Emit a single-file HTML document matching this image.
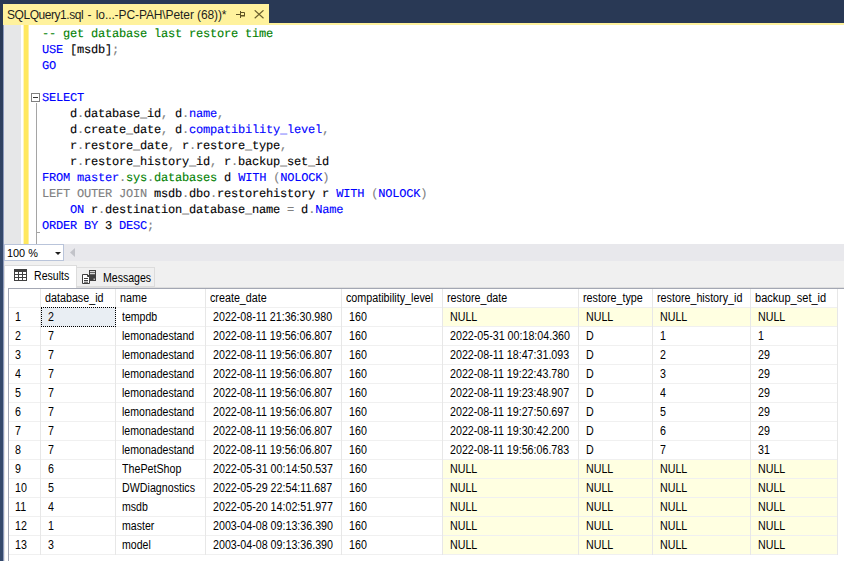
<!DOCTYPE html>
<html><head><meta charset="utf-8"><title>SQLQuery1.sql</title>
<style>
html,body{margin:0;padding:0;}
body{width:844px;height:561px;position:relative;overflow:hidden;background:#fff;font-family:"Liberation Sans",sans-serif;}
div{position:absolute;box-sizing:border-box;}
i{font-style:normal;}
#top{left:0;top:0;width:844px;height:23px;background:#293955;}
#yl{left:0;top:23px;width:844px;height:2px;background:#fff29d;}
#tab{left:3px;top:4px;width:266px;height:21px;background:#fff29d;color:#1e1e1e;font-size:12px;line-height:20px;white-space:nowrap;}
#tabt{left:4px;top:1px;letter-spacing:-0.16px;}
#lft{left:0;top:0;width:3px;height:561px;background:linear-gradient(#293955 0,#293955 25px,#35496b 250px,#35496b 100%);}
#lft2{left:3px;top:25px;width:1px;height:536px;background:#8e9bbc;z-index:5;}
#lft3{left:4px;top:261px;width:1px;height:300px;background:#e4e4e4;}
#margin{left:3px;top:25px;width:18px;height:219px;background:#e6e7e8;}
#ybar{left:23px;top:25px;width:6px;height:219px;background:linear-gradient(90deg,#fff6be 0,#fff6be 1px,#ffe85e 1px,#ffe85e 5px,#fff19e 5px,#fff19e 6px);}
#code{left:42px;top:26px;text-rendering:geometricPrecision;-webkit-text-stroke:0.12px;font-family:"Liberation Mono",monospace;font-size:12px;letter-spacing:-0.2px;line-height:16px;white-space:pre;color:#000;}
#code div{position:static;height:16px;}
.k{color:#0000ff;}.c{color:#008000;}.g{color:#808080;}
#obox{left:31px;top:93px;width:9px;height:9px;border:1px solid #808080;background:#fff;}
#ominus{left:33px;top:97px;width:5px;height:1px;background:#333;}
#oline{left:36px;top:103px;width:1px;height:141px;background:#a5a5a5;}
#otick{left:36px;top:232px;width:4px;height:1px;background:#a5a5a5;}
#zbar{left:3px;top:244px;width:841px;height:17px;background:#e8e8ec;}
#zbox{left:4px;top:244px;width:60px;height:17px;background:#fff;border:1px solid #b9c4da;font-size:12px;line-height:15px;color:#000;}
.sx{position:absolute;white-space:nowrap;transform-origin:0 0;line-height:14px;font-size:12px;color:#000;}
#pane{left:4px;top:261px;width:840px;height:27px;background:#f0f0f0;}
#pane2{left:5px;top:287px;width:839px;height:274px;background:#fff;}
#pl{left:77px;top:287px;width:767px;height:1px;background:#dedede;}
#tabR{left:4px;top:265px;width:73px;height:23px;background:#fff;border:1px solid #dcdcdc;border-bottom:none;}
#tabM{left:76px;top:267px;width:79px;height:20px;background:#f0f0f0;border:1px solid #dcdcdc;}
#grid{left:8px;top:288px;width:836px;height:273px;background:#fff;border-left:1px solid #a3a7b3;border-top:1px solid #a3a7b3;}
.t{font-size:12px;line-height:19px;color:#000;white-space:nowrap;height:19px;transform:scaleX(.88);transform-origin:0 0;}
.d{transform:scaleX(.89);}
.hl{background:#e7e7e7;width:1px;}
.vl{background:#f0f0f0;}
.n{background:#ffffe1;}
</style></head><body>
<div id="top"></div><div id="yl"></div>
<div id="tab"><div id="tabt"><span style="letter-spacing:-0.45px">SQLQuery1.sql</span><span style="word-spacing:1.2px"> - </span><span style="letter-spacing:-0.1px">lo...-PC-PAH\Peter (68))*</span></div>
<svg style="position:absolute;left:233px;top:6px" width="30" height="10" viewBox="0 0 30 10"><path d="M0 4.5H4M4.5 1V8M4.5 2.5H8.5V6M4.5 6H9" fill="none" stroke="#5f5424" stroke-width="1"/><path d="M4.5 5.5H9" fill="none" stroke="#5f5424" stroke-width="1"/><path d="M18.7 0.3L27.5 8.2M27.5 0.3L18.7 8.2" fill="none" stroke="#6b5f2e" stroke-width="1.2"/></svg>
</div>
<div id="lft"></div><div id="lft2"></div>
<div id="margin"></div><div id="ybar"></div>
<div id="code"><div><i class="c">-- get database last restore time</i></div><div><i class="k">USE</i> [msdb]<i class="g">;</i></div><div><i class="k">GO</i></div><div></div><div><i class="k">SELECT</i></div><div>    d<i class="g">.</i>database_id<i class="g">,</i> d<i class="g">.</i><i class="k">name</i><i class="g">,</i></div><div>    d<i class="g">.</i>create_date<i class="g">,</i> d<i class="g">.</i><i class="k">compatibility_level</i><i class="g">,</i></div><div>    r<i class="g">.</i>restore_date<i class="g">,</i> r<i class="g">.</i>restore_type<i class="g">,</i></div><div>    r<i class="g">.</i>restore_history_id<i class="g">,</i> r<i class="g">.</i>backup_set_id</div><div><i class="k">FROM</i> <i class="k">master</i><i class="g">.</i><i class="c">sys</i><i class="g">.</i><i class="c">databases</i> d <i class="k">WITH</i> <i class="g">(</i><i class="k">NOLOCK</i><i class="g">)</i></div><div><i class="g">LEFT OUTER JOIN</i> msdb<i class="g">.</i>dbo<i class="g">.</i>restorehistory r <i class="k">WITH</i> <i class="g">(</i><i class="k">NOLOCK</i><i class="g">)</i></div><div>    <i class="k">ON</i> r<i class="g">.</i>destination_database_name <i class="g">=</i> d<i class="g">.</i><i class="k">Name</i></div><div><i class="k">ORDER BY</i> 3 <i class="k">DESC</i><i class="g">;</i></div></div>
<div id="oline"></div><div id="otick"></div><div id="obox"></div><div id="ominus"></div>
<div id="zbar"></div><div id="zbox"><span class="sx" style="left:2px;top:1px;font-size:11px;transform:scaleX(.99)">100 %</span><svg style="position:absolute;left:50px;top:7px" width="6" height="3"><path d="M0 0H6L3 3Z" fill="#1e1e1e"/></svg></div>
<svg style="position:absolute;left:70px;top:248px" width="5" height="9"><path d="M5 0V9L0 4.5Z" fill="#c2c3c9"/></svg>
<div id="pane"></div><div id="pane2"></div><div id="pl"></div><div id="lft3"></div>
<div id="tabM"><svg style="position:absolute;left:5px;top:2px" width="16" height="15" viewBox="0 0 16 15"><rect x="7" y="0" width="7" height="11" fill="#3f3f3f"/><rect x="8" y="1.2" width="5" height="1" fill="#fff"/><rect x="8" y="3.2" width="5" height="1" fill="#fff"/><rect x="11.6" y="8.6" width="1.2" height="1.2" fill="#fff"/><path d="M0.5 4.5H5.5L7.5 6.5V13.5H0.5Z" fill="#fff" stroke="#3f3f3f"/><path d="M5.5 4.5V6.5H7.5" fill="none" stroke="#3f3f3f"/><path d="M2 8.5H6M2 10.5H6M2 12.2H6" stroke="#3f3f3f"/></svg><span class="sx" style="left:26px;top:3px;transform:scaleX(.88)">Messages</span></div>
<div id="tabR"><svg style="position:absolute;left:9px;top:3px" width="13" height="12" viewBox="0 0 13 12"><rect x="0" y="0" width="13" height="12" fill="#404040"/><g fill="#fff"><rect x="1" y="3" width="3" height="2"/><rect x="5" y="3" width="3" height="2"/><rect x="9" y="3" width="3" height="2"/><rect x="1" y="6" width="3" height="2"/><rect x="5" y="6" width="3" height="2"/><rect x="9" y="6" width="3" height="2"/><rect x="1" y="9" width="3" height="2"/><rect x="5" y="9" width="3" height="2"/><rect x="9" y="9" width="3" height="2"/></g></svg><span class="sx" style="left:29px;top:3px;transform:scaleX(.88)">Results</span></div>
<div id="grid"></div>
<div class="n" style="left:443px;top:308px;width:135px;height:18px"></div>
<div class="n" style="left:579px;top:308px;width:73px;height:18px"></div>
<div class="n" style="left:653px;top:308px;width:97px;height:18px"></div>
<div class="n" style="left:751px;top:308px;width:86px;height:18px"></div>
<div class="n" style="left:443px;top:460px;width:135px;height:18px"></div>
<div class="n" style="left:579px;top:460px;width:73px;height:18px"></div>
<div class="n" style="left:653px;top:460px;width:97px;height:18px"></div>
<div class="n" style="left:751px;top:460px;width:86px;height:18px"></div>
<div class="n" style="left:443px;top:479px;width:135px;height:18px"></div>
<div class="n" style="left:579px;top:479px;width:73px;height:18px"></div>
<div class="n" style="left:653px;top:479px;width:97px;height:18px"></div>
<div class="n" style="left:751px;top:479px;width:86px;height:18px"></div>
<div class="n" style="left:443px;top:498px;width:135px;height:18px"></div>
<div class="n" style="left:579px;top:498px;width:73px;height:18px"></div>
<div class="n" style="left:653px;top:498px;width:97px;height:18px"></div>
<div class="n" style="left:751px;top:498px;width:86px;height:18px"></div>
<div class="n" style="left:443px;top:517px;width:135px;height:18px"></div>
<div class="n" style="left:579px;top:517px;width:73px;height:18px"></div>
<div class="n" style="left:653px;top:517px;width:97px;height:18px"></div>
<div class="n" style="left:751px;top:517px;width:86px;height:18px"></div>
<div class="n" style="left:443px;top:536px;width:135px;height:18px"></div>
<div class="n" style="left:579px;top:536px;width:73px;height:18px"></div>
<div class="n" style="left:653px;top:536px;width:97px;height:18px"></div>
<div class="n" style="left:751px;top:536px;width:86px;height:18px"></div>
<div class="vl" style="left:9px;top:307px;width:829px;height:1px"></div>
<div class="vl" style="left:9px;top:326px;width:829px;height:1px"></div>
<div class="vl" style="left:9px;top:345px;width:829px;height:1px"></div>
<div class="vl" style="left:9px;top:364px;width:829px;height:1px"></div>
<div class="vl" style="left:9px;top:383px;width:829px;height:1px"></div>
<div class="vl" style="left:9px;top:402px;width:829px;height:1px"></div>
<div class="vl" style="left:9px;top:421px;width:829px;height:1px"></div>
<div class="vl" style="left:9px;top:440px;width:829px;height:1px"></div>
<div class="vl" style="left:9px;top:459px;width:829px;height:1px"></div>
<div class="vl" style="left:9px;top:478px;width:829px;height:1px"></div>
<div class="vl" style="left:9px;top:497px;width:829px;height:1px"></div>
<div class="vl" style="left:9px;top:516px;width:829px;height:1px"></div>
<div class="vl" style="left:9px;top:535px;width:829px;height:1px"></div>
<div class="vl" style="left:9px;top:554px;width:829px;height:1px"></div>
<div class="hl" style="left:40px;top:289px;height:266px"></div>
<div class="hl" style="left:115px;top:289px;height:266px"></div>
<div class="hl" style="left:205px;top:289px;height:266px"></div>
<div class="hl" style="left:341px;top:289px;height:266px"></div>
<div class="hl" style="left:442px;top:289px;height:266px"></div>
<div class="hl" style="left:578px;top:289px;height:266px"></div>
<div class="hl" style="left:652px;top:289px;height:266px"></div>
<div class="hl" style="left:750px;top:289px;height:266px"></div>
<div class="hl" style="left:837px;top:289px;height:266px"></div>
<div style="left:41px;top:307px;width:75px;height:20px;background:#e9eef3;border:1px dotted #000"></div>
<div class="t" style="left:45.0px;top:289px;transform:scaleX(0.895)">database_id</div>
<div class="t" style="left:120.0px;top:289px;transform:scaleX(0.895)">name</div>
<div class="t" style="left:210.0px;top:289px;transform:scaleX(0.895)">create_date</div>
<div class="t" style="left:346.0px;top:289px;transform:scaleX(0.895)">compatibility_level</div>
<div class="t" style="left:447.0px;top:289px;transform:scaleX(0.895)">restore_date</div>
<div class="t" style="left:583.0px;top:289px;transform:scaleX(0.895)">restore_type</div>
<div class="t" style="left:657.0px;top:289px;transform:scaleX(0.895)">restore_history_id</div>
<div class="t" style="left:755.0px;top:289px;transform:scaleX(0.92)">backup_set_id</div>
<div class="t d" style="left:15.0px;top:308px">1</div>
<div class="t d" style="left:47.5px;top:308px">2</div>
<div class="t" style="left:122px;top:308px">tempdb</div>
<div class="t d" style="left:213.0px;top:308px">2022-08-11 21:36:30.980</div>
<div class="t d" style="left:349.0px;top:308px">160</div>
<div class="t d" style="left:450.0px;top:308px">NULL</div>
<div class="t d" style="left:586.0px;top:308px">NULL</div>
<div class="t d" style="left:660.0px;top:308px">NULL</div>
<div class="t d" style="left:758.0px;top:308px">NULL</div>
<div class="t d" style="left:15.0px;top:327px">2</div>
<div class="t d" style="left:47.5px;top:327px">7</div>
<div class="t" style="left:122px;top:327px">lemonadestand</div>
<div class="t d" style="left:213.0px;top:327px">2022-08-11 19:56:06.807</div>
<div class="t d" style="left:349.0px;top:327px">160</div>
<div class="t d" style="left:450.0px;top:327px">2022-05-31 00:18:04.360</div>
<div class="t d" style="left:586.0px;top:327px">D</div>
<div class="t d" style="left:660.0px;top:327px">1</div>
<div class="t d" style="left:758.0px;top:327px">1</div>
<div class="t d" style="left:15.0px;top:346px">3</div>
<div class="t d" style="left:47.5px;top:346px">7</div>
<div class="t" style="left:122px;top:346px">lemonadestand</div>
<div class="t d" style="left:213.0px;top:346px">2022-08-11 19:56:06.807</div>
<div class="t d" style="left:349.0px;top:346px">160</div>
<div class="t d" style="left:450.0px;top:346px">2022-08-11 18:47:31.093</div>
<div class="t d" style="left:586.0px;top:346px">D</div>
<div class="t d" style="left:660.0px;top:346px">2</div>
<div class="t d" style="left:758.0px;top:346px">29</div>
<div class="t d" style="left:15.0px;top:365px">4</div>
<div class="t d" style="left:47.5px;top:365px">7</div>
<div class="t" style="left:122px;top:365px">lemonadestand</div>
<div class="t d" style="left:213.0px;top:365px">2022-08-11 19:56:06.807</div>
<div class="t d" style="left:349.0px;top:365px">160</div>
<div class="t d" style="left:450.0px;top:365px">2022-08-11 19:22:43.780</div>
<div class="t d" style="left:586.0px;top:365px">D</div>
<div class="t d" style="left:660.0px;top:365px">3</div>
<div class="t d" style="left:758.0px;top:365px">29</div>
<div class="t d" style="left:15.0px;top:384px">5</div>
<div class="t d" style="left:47.5px;top:384px">7</div>
<div class="t" style="left:122px;top:384px">lemonadestand</div>
<div class="t d" style="left:213.0px;top:384px">2022-08-11 19:56:06.807</div>
<div class="t d" style="left:349.0px;top:384px">160</div>
<div class="t d" style="left:450.0px;top:384px">2022-08-11 19:23:48.907</div>
<div class="t d" style="left:586.0px;top:384px">D</div>
<div class="t d" style="left:660.0px;top:384px">4</div>
<div class="t d" style="left:758.0px;top:384px">29</div>
<div class="t d" style="left:15.0px;top:403px">6</div>
<div class="t d" style="left:47.5px;top:403px">7</div>
<div class="t" style="left:122px;top:403px">lemonadestand</div>
<div class="t d" style="left:213.0px;top:403px">2022-08-11 19:56:06.807</div>
<div class="t d" style="left:349.0px;top:403px">160</div>
<div class="t d" style="left:450.0px;top:403px">2022-08-11 19:27:50.697</div>
<div class="t d" style="left:586.0px;top:403px">D</div>
<div class="t d" style="left:660.0px;top:403px">5</div>
<div class="t d" style="left:758.0px;top:403px">29</div>
<div class="t d" style="left:15.0px;top:422px">7</div>
<div class="t d" style="left:47.5px;top:422px">7</div>
<div class="t" style="left:122px;top:422px">lemonadestand</div>
<div class="t d" style="left:213.0px;top:422px">2022-08-11 19:56:06.807</div>
<div class="t d" style="left:349.0px;top:422px">160</div>
<div class="t d" style="left:450.0px;top:422px">2022-08-11 19:30:42.200</div>
<div class="t d" style="left:586.0px;top:422px">D</div>
<div class="t d" style="left:660.0px;top:422px">6</div>
<div class="t d" style="left:758.0px;top:422px">29</div>
<div class="t d" style="left:15.0px;top:441px">8</div>
<div class="t d" style="left:47.5px;top:441px">7</div>
<div class="t" style="left:122px;top:441px">lemonadestand</div>
<div class="t d" style="left:213.0px;top:441px">2022-08-11 19:56:06.807</div>
<div class="t d" style="left:349.0px;top:441px">160</div>
<div class="t d" style="left:450.0px;top:441px">2022-08-11 19:56:06.783</div>
<div class="t d" style="left:586.0px;top:441px">D</div>
<div class="t d" style="left:660.0px;top:441px">7</div>
<div class="t d" style="left:758.0px;top:441px">31</div>
<div class="t d" style="left:15.0px;top:460px">9</div>
<div class="t d" style="left:47.5px;top:460px">6</div>
<div class="t d" style="left:122px;top:460px">ThePetShop</div>
<div class="t d" style="left:213.0px;top:460px">2022-05-31 00:14:50.537</div>
<div class="t d" style="left:349.0px;top:460px">160</div>
<div class="t d" style="left:450.0px;top:460px">NULL</div>
<div class="t d" style="left:586.0px;top:460px">NULL</div>
<div class="t d" style="left:660.0px;top:460px">NULL</div>
<div class="t d" style="left:758.0px;top:460px">NULL</div>
<div class="t d" style="left:15.0px;top:479px">10</div>
<div class="t d" style="left:47.5px;top:479px">5</div>
<div class="t d" style="left:122px;top:479px">DWDiagnostics</div>
<div class="t d" style="left:213.0px;top:479px">2022-05-29 22:54:11.687</div>
<div class="t d" style="left:349.0px;top:479px">160</div>
<div class="t d" style="left:450.0px;top:479px">NULL</div>
<div class="t d" style="left:586.0px;top:479px">NULL</div>
<div class="t d" style="left:660.0px;top:479px">NULL</div>
<div class="t d" style="left:758.0px;top:479px">NULL</div>
<div class="t d" style="left:15.0px;top:498px">11</div>
<div class="t d" style="left:47.5px;top:498px">4</div>
<div class="t" style="left:122px;top:498px">msdb</div>
<div class="t d" style="left:213.0px;top:498px">2022-05-20 14:02:51.977</div>
<div class="t d" style="left:349.0px;top:498px">160</div>
<div class="t d" style="left:450.0px;top:498px">NULL</div>
<div class="t d" style="left:586.0px;top:498px">NULL</div>
<div class="t d" style="left:660.0px;top:498px">NULL</div>
<div class="t d" style="left:758.0px;top:498px">NULL</div>
<div class="t d" style="left:15.0px;top:517px">12</div>
<div class="t d" style="left:47.5px;top:517px">1</div>
<div class="t" style="left:122px;top:517px">master</div>
<div class="t d" style="left:213.0px;top:517px">2003-04-08 09:13:36.390</div>
<div class="t d" style="left:349.0px;top:517px">160</div>
<div class="t d" style="left:450.0px;top:517px">NULL</div>
<div class="t d" style="left:586.0px;top:517px">NULL</div>
<div class="t d" style="left:660.0px;top:517px">NULL</div>
<div class="t d" style="left:758.0px;top:517px">NULL</div>
<div class="t d" style="left:15.0px;top:536px">13</div>
<div class="t d" style="left:47.5px;top:536px">3</div>
<div class="t" style="left:122px;top:536px">model</div>
<div class="t d" style="left:213.0px;top:536px">2003-04-08 09:13:36.390</div>
<div class="t d" style="left:349.0px;top:536px">160</div>
<div class="t d" style="left:450.0px;top:536px">NULL</div>
<div class="t d" style="left:586.0px;top:536px">NULL</div>
<div class="t d" style="left:660.0px;top:536px">NULL</div>
<div class="t d" style="left:758.0px;top:536px">NULL</div>
</body></html>
